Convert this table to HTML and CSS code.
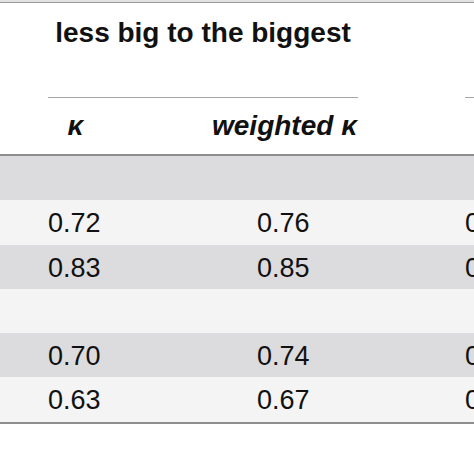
FILE: index.html
```html
<!DOCTYPE html>
<html>
<head>
<meta charset="utf-8">
<link rel="stylesheet" href="styles.css">
</head>
<body>
<div class="page">
  <div class="topline"></div>
  <div class="title-row"><div class="title">less big to the biggest</div></div>
  <div class="rule-row"><span class="rule r1"></span><span class="rule r2"></span></div>
  <div class="grid head-row">
    <div></div>
    <div class="hcell"><span>κ</span></div>
    <div class="hcell"><span>weighted κ</span></div>
    <div></div>
  </div>
  <div class="thick"></div>
  <div class="grid row dark"><div></div><div></div><div></div><div></div></div>
  <div class="grid row light"><div></div><div>0.72</div><div>0.76</div><div>0.70</div></div>
  <div class="grid row dark"><div></div><div>0.83</div><div>0.85</div><div>0.81</div></div>
  <div class="grid row light"><div></div><div></div><div></div><div></div></div>
  <div class="grid row dark"><div></div><div>0.70</div><div>0.74</div><div>0.68</div></div>
  <div class="grid row light"><div></div><div>0.63</div><div>0.67</div><div>0.61</div></div>
  <div class="thick"></div>
</div>
</body>
</html>
```
FILE: styles.css
```css
html, body {
  margin: 0;
  padding: 0;
  background: #ffffff;
}
.page {
  width: 474px;
  overflow: hidden;
  white-space: nowrap;
  font-family: "Liberation Sans", Arial, Helvetica, sans-serif;
  color: #111111;
}
.topline {
  height: 2px;
  background: #e2e2e2;
  border-bottom: 1px solid #989898;
}
.title-row {
  padding-top: 14px;
  padding-left: 48px;
}
.title {
  width: 310px;
  text-align: center;
  font-weight: bold;
  font-size: 28px;
  line-height: 32px;
}
.rule-row {
  display: flex;
  margin-top: 48px;
  height: 1px;
}
.rule {
  display: block;
  flex-shrink: 0;
  height: 1px;
  background: #a6a6a6;
}
.r1 {
  margin-left: 48px;
  width: 310px;
}
.r2 {
  margin-left: 107px;
  width: 9px;
}
.grid {
  display: grid;
  grid-template-columns: 48px 209px 208px 209px;
}
.head-row {
  height: 56px;
  line-height: 56px;
  font-size: 28px;
  font-weight: bold;
  font-style: italic;
}
.hcell {
  display: flex;
  justify-content: center;
  width: 55px;
}
.thick {
  height: 2px;
  background: #8e8e8e;
}
.row {
  box-sizing: border-box;
  height: 44.3px;
  padding-top: 2px;
  line-height: 42.3px;
  font-size: 27px;
}
.dark {
  background: #dcdcde;
}
.light {
  background: #f4f4f4;
}
```
